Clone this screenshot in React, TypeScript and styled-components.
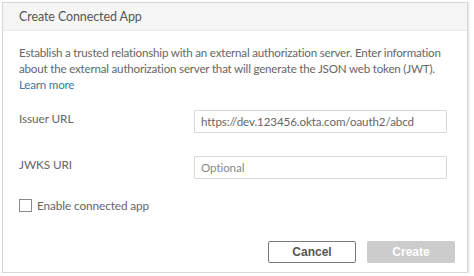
import React from "react";
import styled, { createGlobalStyle } from "styled-components";

const Global = createGlobalStyle`
  html, body { margin: 0; padding: 0; background: #ffffff; }
  body { font-family: Lato, "Open Sans", sans-serif; }
  * { box-sizing: border-box; }
`;

const Dialog = styled.div`
  margin: 2px 0 0 2px;
  width: 466px;
  height: 271px;
  border: 1px solid #d6d6d6;
  box-shadow: 1px 1px 2px rgba(0, 0, 0, 0.12);
  background: #fff;
  display: flex;
  flex-direction: column;
`;

const Header = styled.div`
  height: 28px;
  background: #f5f5f5;
  border-bottom: 1px solid #ececec;
  display: flex;
  align-items: center;
  padding-left: 16px;
  font-size: 12.5px;
  letter-spacing: -0.1px;
  color: #555;
`;

const Body = styled.div`
  flex: 1;
  display: flex;
  flex-direction: column;
  padding: 14px 19px 9px 16px;
`;

const Intro = styled.div`
  display: flex;
  flex-direction: column;
  font-size: 11.6px;
  letter-spacing: -0.2px;
  line-height: 16px;
  color: #666;
  white-space: nowrap;
`;

const Link = styled.a`
  color: #3a78a8;
  text-decoration: none;
`;

const Row = styled.div<{ $top: number }>`
  display: flex;
  align-items: center;
  margin-top: ${(p) => p.$top}px;
  height: 23px;
`;

const Label = styled.label`
  width: 175px;
  font-size: 11.8px;
  letter-spacing: -0.1px;
  color: #666;
  margin-top: -6px;
`;

const Input = styled.input`
  width: 253px;
  height: 23px;
  border: 1px solid #d9d9d9;
  border-radius: 1px;
  padding: 0 6px;
  font-family: Lato, "Open Sans", sans-serif;
  font-size: 11.6px;
  letter-spacing: -0.1px;
  color: #666;
  outline: none;
  &::placeholder { color: #888; }
`;

const CheckRow = styled.label`
  display: flex;
  align-items: center;
  gap: 5px;
  margin-top: 19px;
  font-size: 11.8px;
  letter-spacing: -0.1px;
  color: #666;
`;

const Box = styled.span`
  width: 13px;
  height: 13px;
  border: 1px solid #8a8a8a;
  display: inline-block;
  background: #fff;
`;

const Footer = styled.div`
  margin-top: auto;
  display: flex;
  justify-content: flex-end;
  gap: 11px;
  margin-right: -7px;
`;

const Button = styled.button<{ $primary?: boolean }>`
  width: 88px;
  height: 22px;
  border-radius: 2px;
  font-family: "Liberation Sans", Arial, sans-serif;
  font-weight: bold;
  font-size: 12px;
  cursor: pointer;
  border: 1px solid ${(p) => (p.$primary ? "#cccccc" : "#7a7a7a")};
  background: ${(p) => (p.$primary ? "#cccccc" : "#ffffff")};
  color: ${(p) => (p.$primary ? "#ffffff" : "#555555")};
`;

export default function App() {
  return (
    <>
      <Global />
      <Dialog>
        <Header>Create Connected App</Header>
        <Body>
          <Intro>
            <span>Establish a trusted relationship with an external authorization server. Enter information</span>
            <span>about the external authorization server that will generate the JSON web token (JWT).</span>
            <Link href="#">Learn more</Link>
          </Intro>
          <Row $top={17}>
            <Label>Issuer URL</Label>
            <Input defaultValue="https://dev.123456.okta.com/oauth2/abcd" />
          </Row>
          <Row $top={23}>
            <Label>JWKS URI</Label>
            <Input placeholder="Optional" />
          </Row>
          <CheckRow>
            <Box />
            Enable connected app
          </CheckRow>
          <Footer>
            <Button>Cancel</Button>
            <Button $primary>Create</Button>
          </Footer>
        </Body>
      </Dialog>
    </>
  );
}
